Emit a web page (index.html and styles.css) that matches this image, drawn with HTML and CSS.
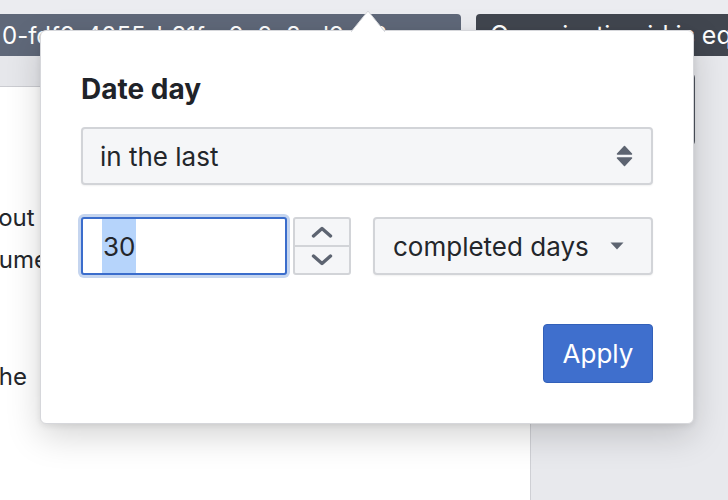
FILE: index.html
```html
<!DOCTYPE html>
<html lang="en">
<head>
<meta charset="utf-8">
<title>Date day filter</title>
<link rel="stylesheet" href="styles.css">
</head>
<body>
<div class="app">
  <div class="filters">
    <div class="chip chip-id"><span class="chip-text">0-fdf9-4055-b81f-a9e2c8ad9c38</span><span class="chip-x">×</span></div>
    <div class="chip chip-org"><span class="chip-text">Organization id is equal to 1</span></div>
  </div>
  <div class="main">
    <div class="panel">
      <p class="para"><span class="line l1">about this question and the data</span><span class="line l2">document the results</span></p>
      <p class="para"><span class="line l3">the&nbsp;&nbsp;dashboard</span></p>
    </div>
    <div class="side"><div class="side-btn"></div></div>
  </div>

  <div class="popover">
    <svg class="arrow" width="34" height="22" viewBox="0 0 34 22"><path d="M0 22 L17 1 L34 22" fill="#fff" stroke="#d6d7db" stroke-width="1"/></svg>
    <h2 class="title">Date day</h2>
    <div class="select select-op">
      <span class="select-text">in the last</span>
      <svg class="updown" width="17" height="22" viewBox="0 0 17 22"><path d="M8.5 1.5 L15.5 9 H1.5 Z M1.5 13 H15.5 L8.5 20.5 Z" fill="#5d6471" stroke="#5d6471" stroke-width="1.5" stroke-linejoin="round"/></svg>
    </div>
    <div class="row">
      <div class="num-input"><span class="num-sel">30</span></div>
      <div class="spinner">
        <div class="spin-btn"><svg width="22" height="12" viewBox="0 0 22 12"><polyline points="2.5,10 11,2.5 19.5,10" fill="none" stroke="#5d6471" stroke-width="3.4" stroke-linecap="round" stroke-linejoin="round"/></svg></div>
        <div class="spin-btn spin-down"><svg width="22" height="12" viewBox="0 0 22 12"><polyline points="2.5,2 11,9.5 19.5,2" fill="none" stroke="#5d6471" stroke-width="3.4" stroke-linecap="round" stroke-linejoin="round"/></svg></div>
      </div>
      <div class="select select-unit">
        <span class="select-text">completed days</span>
        <svg class="caret" width="14" height="8" viewBox="0 0 14 8"><path d="M0.5 0.5 H13.5 L7 7.5 Z" fill="#5d6471"/></svg>
      </div>
    </div>
    <div class="actions"><button class="apply" type="button">Apply</button></div>
  </div>
</div>
</body>
</html>
```

FILE: styles.css
```css
* { box-sizing: border-box; }
html, body { margin: 0; padding: 0; }
body {
  width: 728px;
  height: 500px;
  overflow: hidden;
  background: #ebecf0;
  font-family: Inter, "Noto Sans", "Liberation Sans", sans-serif;
  color: #24282e;
}
.app { position: relative; width: 728px; height: 500px; overflow: hidden; }

.filters {
  display: flex;
  padding-top: 14px;
  height: 56px;
  white-space: nowrap;
}
.chip {
  display: flex;
  align-items: center;
  height: 42px;
  border-radius: 4px;
  color: #fff;
  font-size: 24px;
  flex-shrink: 0;
}
.chip-id {
  background: #5f6879;
  margin-left: -14px;
  padding: 0 15px 0 16px;
  width: 475px;
}
.chip-x { margin-left: auto; font-size: 26px; color: #e8eaee; }
.chip-org {
  background: #41464f;
  margin-left: 15px;
  padding: 0 14px;
  font-size: 25px;
}

.main { display: flex; align-items: flex-start; height: 444px; background: #e6e7eb; }
.panel {
  width: 531px;
  height: 414px;
  margin-top: 30px;
  background: #fff;
  border-top: 1px solid #cbccd1;
  border-right: 1px solid #cfd0d5;
  padding-top: 110px;
  font-size: 24px;
  line-height: 42px;
  color: #23262b;
  white-space: nowrap;
  overflow: hidden;
}
.para { margin: 0 0 75px; }
.line { display: block; }
.l1 { margin-left: -30px; }
.l2 { margin-left: -44px; }
.l3 { margin-left: -9px; }
.side {
  flex: 1;
  height: 444px;
  background: #e8e9ed;
  padding: 16px 0 0 89px;
}
.side-btn {
  width: 75px;
  height: 75px;
  border-radius: 6px;
  background: #50555f;
}

.popover {
  position: absolute;
  left: 40px;
  top: 30px;
  width: 654px;
  background: #fff;
  border: 1px solid #d6d7db;
  border-radius: 6px;
  padding: 42px 40px 40px;
  box-shadow: 0 12px 34px rgba(0, 0, 0, 0.17), 0 2px 6px rgba(0, 0, 0, 0.08);
}
.arrow { position: absolute; top: -21px; left: 310px; display: block; }

.title {
  margin: 0 0 22px;
  font-size: 28px;
  line-height: 32px;
  font-weight: 700;
  color: #1f2329;
}

.select {
  display: flex;
  align-items: center;
  height: 58px;
  background: #f5f6f8;
  border: 2px solid #d2d4d8;
  border-radius: 4px;
  box-shadow: 0 1px 2px rgba(0, 0, 0, 0.06);
  font-size: 26px;
  color: #23262b;
}
.select-op { padding: 0 18px 0 17px; }
.select-text { flex: 1; }
.updown { display: block; }

.row { display: flex; margin-top: 32px; height: 58px; }
.num-input {
  width: 206px;
  height: 58px;
  border: 2px solid #3b6dcc;
  border-radius: 3px;
  background: #fff;
  box-shadow: 0 0 0 3px #c5d5ef;
  padding: 0 0 0 19px;
  display: flex;
  font-size: 26px;
  color: #23262b;
}
.num-sel {
  display: flex;
  align-items: center;
  background: #b6d4fb;
  padding: 0 1px;
}
.spinner {
  width: 58px;
  height: 58px;
  margin-left: 6px;
  border: 2px solid #d2d4d8;
  border-radius: 3px;
  background: #f5f6f8;
  display: flex;
  flex-direction: column;
}
.spin-btn {
  flex: 1;
  display: flex;
  align-items: center;
  justify-content: center;
}
.spin-btn svg { display: block; }
.spin-down { border-top: 2px solid #d2d4d8; }
.select-unit {
  flex: 1;
  margin-left: 22px;
  padding: 0 27px 0 18px;
}
.caret { display: block; }

.actions { display: flex; justify-content: flex-end; margin-top: 49px; }
.apply {
  width: 110px;
  height: 59px;
  background: #3f6fcd;
  border: 1px solid #3260b9;
  border-radius: 4px;
  color: #fff;
  font-family: Inter, "Noto Sans", "Liberation Sans", sans-serif;
  font-size: 26px;
  padding: 0;
}
```
